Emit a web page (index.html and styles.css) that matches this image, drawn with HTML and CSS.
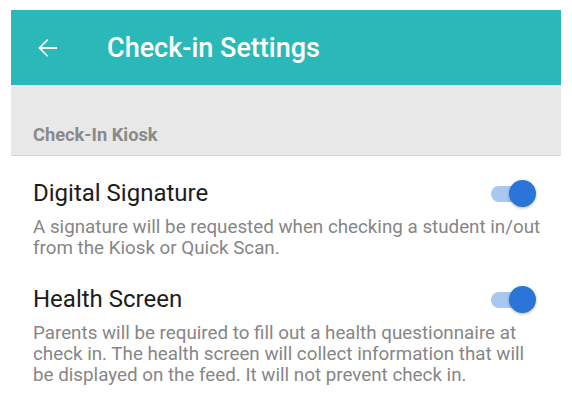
FILE: index.html
```html
<!DOCTYPE html>
<html lang="en">
<head>
    <meta charset="UTF-8">
    <meta name="viewport" content="width=device-width, initial-scale=1.0">
    <title>Check-in Settings</title>
    <link rel="stylesheet" href="styles.css">
</head>
<body>
    <div class="screen">
        <div class="toolbar">
            <button class="back" aria-label="Back">
                <svg width="30" height="30" viewBox="0 0 24 24">
                    <path d="M20 11.1H7.6l5.4-5.4-.9-.9L5 11.9l7.1 7.1.9-.9-5.4-5.4H20v-1.6z" fill="#fff"/>
                </svg>
            </button>
            <h1>Check-in Settings</h1>
        </div>

        <div class="section-head">Check-In Kiosk</div>

        <div class="setting">
            <div class="setting-top">
                <span class="setting-title">Digital Signature</span>
                <span class="switch on"><span class="track"></span><span class="thumb"></span></span>
            </div>
            <p class="setting-desc">A signature will be requested when checking a student in/out from the Kiosk or Quick Scan.</p>
        </div>

        <div class="setting">
            <div class="setting-top">
                <span class="setting-title">Health Screen</span>
                <span class="switch on"><span class="track"></span><span class="thumb"></span></span>
            </div>
            <p class="setting-desc">Parents will be required to fill out a health questionnaire at check in. The health screen will collect information that will be displayed on the feed. It will not prevent check in.</p>
        </div>
    </div>
</body>
</html>
```

FILE: styles.css
```css
* {
    margin: 0;
    padding: 0;
    box-sizing: border-box;
}

body {
    font-family: Roboto, "Liberation Sans", sans-serif;
    background-color: #fff;
}

.screen {
    width: 550px;
    margin: 10px 0 0 11px;
    background-color: #fff;
}

.toolbar {
    height: 75px;
    background-color: #2bb8b9;
    display: flex;
    align-items: center;
    padding-left: 21px;
}

.back {
    background: none;
    border: none;
    width: 30px;
    height: 30px;
    margin-right: 45px;
    display: flex;
}

.toolbar h1 {
    color: #fff;
    font-size: 27px;
    font-weight: 500;
}

.section-head {
    height: 71px;
    background-color: #e8e8e8;
    border-bottom: 1px solid #d6d6d6;
    color: #8a8a8a;
    font-size: 18.3px;
    line-height: 20px;
    font-weight: 700;
    padding: 40px 0 0 22px;
}

.setting {
    padding: 23px 15px 3px 22px;
}

.setting-top {
    display: flex;
    justify-content: space-between;
    align-items: center;
    height: 28px;
}

.setting-title {
    font-size: 24px;
    line-height: 28px;
    color: #1c1c1c;
}

.setting-desc {
    font-size: 18.8px;
    line-height: 21px;
    color: #868686;
    margin-top: 10px;
}

.switch {
    position: relative;
    width: 45px;
    height: 27px;
    margin-right: 10px;
}

.switch .track {
    position: absolute;
    left: 0;
    top: 6px;
    width: 36px;
    height: 16px;
    border-radius: 8px;
    background-color: #a9c8ef;
}

.switch .thumb {
    position: absolute;
    right: 0;
    top: 0;
    width: 27px;
    height: 27px;
    border-radius: 50%;
    background-color: #2a75d7;
    box-shadow: 0 1px 3px rgba(0, 0, 0, 0.3);
}
```
